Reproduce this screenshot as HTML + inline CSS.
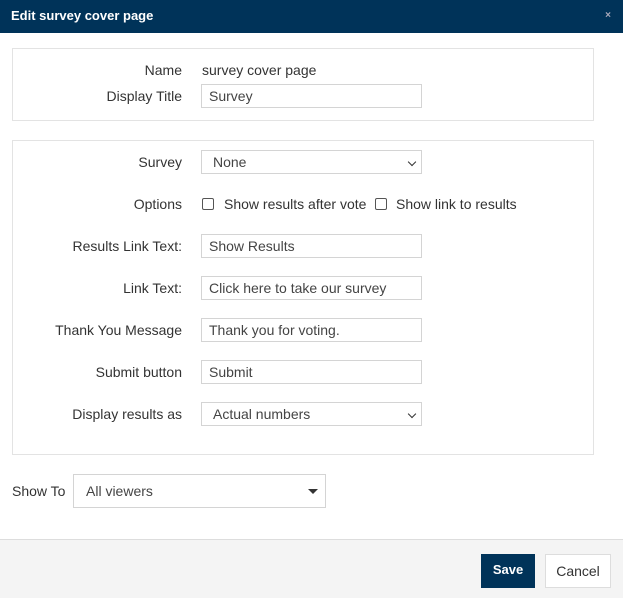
<!DOCTYPE html>
<html><head><style>
*{box-sizing:border-box;margin:0;padding:0}
body{width:623px;height:598px;position:relative;background:#fff;font-family:"Liberation Sans Narrow","Liberation Sans",sans-serif;font-size:14px;color:#333;overflow:hidden}
.hdr{position:absolute;left:0;top:0;width:623px;height:33px;background:#003359;color:#fff;font-weight:bold;font-size:13px;line-height:32px;padding-left:11px}
.x{position:absolute;right:12px;top:0;font-size:10px;color:#aab}
.box{position:absolute;left:12px;width:582px;border:1px solid #e3e3e3}
.lbl{position:absolute;right:441px;width:180px;text-align:right;line-height:16px}
.inp{position:absolute;left:201px;width:221px;height:24px;border:1px solid #d4d4d4;line-height:22px;padding-left:7px;color:#444}
.sel{padding-left:11px}
.sel:after{content:"";position:absolute;right:6px;top:8px;width:5px;height:5px;border-right:1.5px solid #333;border-bottom:1.5px solid #333;transform:rotate(45deg)}
.cb{display:inline-block;width:12px;height:12px;border:1px solid #555;border-radius:2px;vertical-align:-1px;margin-right:10px}
.t{position:absolute;line-height:16px}
.foot{position:absolute;left:0;top:539px;width:623px;height:59px;background:#f4f4f4;border-top:1px solid #ddd}
.btn{position:absolute;top:554px;height:34px;line-height:32px;text-align:center;font-size:14px}
</style></head><body>
<div class="hdr">Edit survey cover page<span class="x">×</span></div>
<div class="box" style="top:48px;height:73px"></div>
<div class="lbl" style="top:62px">Name</div>
<div class="t" style="left:202px;top:62px">survey cover page</div>
<div class="lbl" style="top:88px">Display Title</div>
<div class="inp" style="top:84px">Survey</div>

<div class="box" style="top:140px;height:315px"></div>
<div class="lbl" style="top:154px">Survey</div>
<div class="inp sel" style="top:150px">None</div>
<div class="lbl" style="top:196px">Options</div>
<div class="t" style="left:202px;top:196px"><span class="cb"></span>Show results after vote</div>
<div class="t" style="left:375px;top:196px"><span class="cb" style="margin-right:9px"></span>Show link to results</div>
<div class="lbl" style="top:238px">Results Link Text:</div>
<div class="inp" style="top:234px">Show Results</div>
<div class="lbl" style="top:280px">Link Text:</div>
<div class="inp" style="top:276px">Click here to take our survey</div>
<div class="lbl" style="top:322px">Thank You Message</div>
<div class="inp" style="top:318px">Thank you for voting.</div>
<div class="lbl" style="top:364px">Submit button</div>
<div class="inp" style="top:360px">Submit</div>
<div class="lbl" style="top:406px">Display results as</div>
<div class="inp sel" style="top:402px">Actual numbers</div>

<div class="t" style="left:12px;top:483px">Show To</div>
<div class="inp" style="left:73px;top:474px;width:253px;height:34px;line-height:32px;padding-left:12px">All viewers<span style="position:absolute;right:7px;top:14px;border-left:5px solid transparent;border-right:5px solid transparent;border-top:5px solid #333"></span></div>

<div class="foot"></div>
<div class="btn" style="left:481px;width:54px;background:#003359;color:#fff;font-weight:bold;font-size:13px">Save</div>
<div class="btn" style="left:545px;width:66px;background:#fff;border:1px solid #ddd;color:#333">Cancel</div>
</body></html>
